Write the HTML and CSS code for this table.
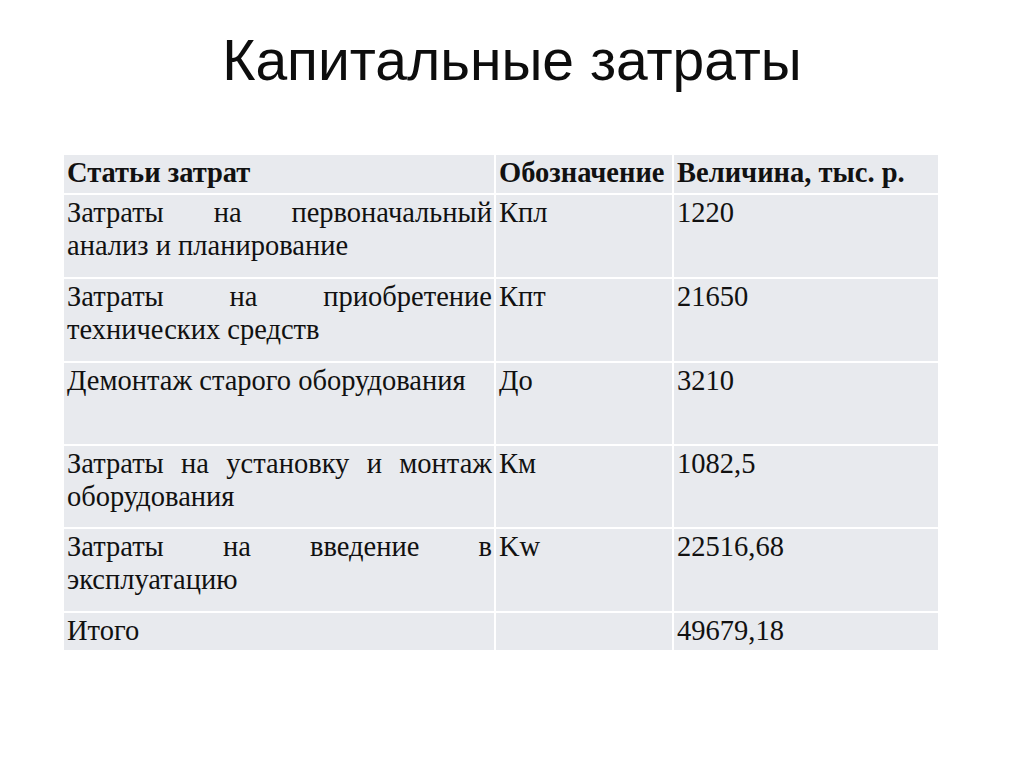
FILE: index.html
```html
<!DOCTYPE html>
<html lang="ru">
<head>
<meta charset="utf-8">
<title>Капитальные затраты</title>
<link rel="stylesheet" href="styles.css">
</head>
<body>
<div class="slide">
  <h1 class="title">Капитальные затраты</h1>
  <table class="costs">
    <colgroup>
      <col class="c1"><col class="c2"><col class="c3">
    </colgroup>
    <thead>
      <tr class="head">
        <th>Статьи затрат</th>
        <th>Обозначение</th>
        <th>Величина, тыс. р.</th>
      </tr>
    </thead>
    <tbody>
      <tr class="row"><td class="just">Затраты на первоначальный анализ и планирование</td><td>Кпл</td><td>1220</td></tr>
      <tr class="row"><td class="just">Затраты на приобретение технических средств</td><td>Кпт</td><td>21650</td></tr>
      <tr class="row short"><td class="just">Демонтаж старого оборудования</td><td>До</td><td>3210</td></tr>
      <tr class="row short"><td class="just">Затраты на установку и монтаж оборудования</td><td>Км</td><td>1082,5</td></tr>
      <tr class="row"><td class="just">Затраты на введение в эксплуатацию</td><td>Kw</td><td>22516,68</td></tr>
      <tr class="total"><td>Итого</td><td></td><td>49679,18</td></tr>
    </tbody>
  </table>
</div>
</body>
</html>
```
FILE: styles.css
```css
html, body {
  margin: 0;
  padding: 0;
  background: #ffffff;
}
.slide {
  width: 1024px;
  height: 767px;
  padding-top: 27px;
  box-sizing: border-box;
}
.title {
  margin: 0;
  font-family: "Liberation Sans", Arial, sans-serif;
  font-weight: normal;
  font-size: 57px;
  line-height: 66px;
  color: #0d0d0d;
  text-align: center;
}
.costs {
  margin-top: 62px;
  margin-left: 64px;
  border-collapse: separate;
  border-spacing: 0;
  table-layout: fixed;
  width: 874px;
  font-family: "Liberation Serif", "Times New Roman", serif;
  font-size: 28.5px;
  color: #111111;
}
.c1 { width: 432px; }
.c2 { width: 178px; }
.c3 { width: 264px; }
.costs th, .costs td {
  box-sizing: border-box;
  background: #e8eaee;
  border-right: 2px solid #ffffff;
  border-bottom: 2px solid #ffffff;
  padding: 1px 2px 0 3px;
  vertical-align: top;
  text-align: left;
  line-height: 33px;
}
.costs th:last-child, .costs td:last-child {
  border-right: none;
}
.costs th {
  font-weight: bold;
  height: 40px;
}
.costs .row td {
  height: 84px;
}
.costs .row.short td {
  height: 83px;
}
.costs td.just {
  text-align: justify;
}
.costs .total td {
  height: 37px;
  border-bottom: none;
}
```
